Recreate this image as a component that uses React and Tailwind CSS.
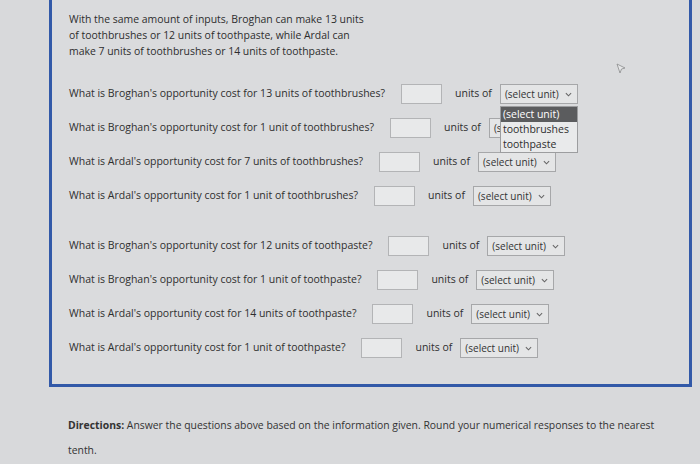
import React from 'react';

const groups = [
    [
        "What is Broghan's opportunity cost for 13 units of toothbrushes?",
        "What is Broghan's opportunity cost for 1 unit of toothbrushes?",
        "What is Ardal's opportunity cost for 7 units of toothbrushes?",
        "What is Ardal's opportunity cost for 1 unit of toothbrushes?",
    ],
    [
        "What is Broghan's opportunity cost for 12 units of toothpaste?",
        "What is Broghan's opportunity cost for 1 unit of toothpaste?",
        "What is Ardal's opportunity cost for 14 units of toothpaste?",
        "What is Ardal's opportunity cost for 1 unit of toothpaste?",
    ],
];

const Chevron = () => (
    <svg className="w-[7px] h-[5px] text-[#666]" viewBox="0 0 8 5" fill="none" stroke="currentColor" strokeWidth="1.2">
        <path d="M1 1l3 3 3-3" />
    </svg>
);

const UnitSelect = ({ open }) => (
    <div className="relative ml-[8px]">
        <div className="w-[78px] h-[20px] flex items-center justify-between pl-[4px] pr-[5px] bg-[#e4e5e6] border border-[#a6a7a9] text-[10px] text-[#333]">
            <span>(select unit)</span>
            <Chevron />
        </div>
        {open && (
            <div className="absolute left-0 top-[22px] w-[78px] bg-[#e9eaeb] border border-[#9c9d9f] text-[10.5px] leading-[15px] text-[#2e2e2e] z-10">
                <div className="bg-[#5b5c5e] text-white px-[2px]">(select unit)</div>
                <div className="px-[2px]">toothbrushes</div>
                <div className="px-[2px]">toothpaste</div>
            </div>
        )}
    </div>
);

const Row = ({ text, open }) => (
    <div className="h-[34px] flex items-center text-[10.5px] text-[#2f2f2f]">
        <span>{text}</span>
        <div className="ml-[16px] w-[41px] h-[20px] bg-[#e8e9ea] border border-[#b3b4b6]" />
        <span className="ml-[13px]">units of</span>
        <UnitSelect open={open} />
    </div>
);

export default function App() {
    return (
        <div className="relative w-[700px] h-[464px] overflow-hidden bg-[#d8d9db]" style={{ fontFamily: '"Open Sans", "Liberation Sans", sans-serif' }}>
            <div className="ml-[49px] w-[643px] border-l-[3px] border-r-[3px] border-b-[3px] border-[#3259a8] bg-[#dadbdd] pl-[17px] pt-[11px] pb-[19px]">
                <p className="text-[10.45px] leading-[16px] text-[#2d2d2d]">
                    With the same amount of inputs, Broghan can make 13 units<br />
                    of toothbrushes or 12 units of toothpaste, while Ardal can<br />
                    make 7 units of toothbrushes or 14 units of toothpaste.
                </p>
                <div className="mt-[18px]">
                    {groups[0].map((q, i) => (
                        <Row key={i} text={q} open={i === 0} />
                    ))}
                </div>
                <div className="mt-[16px]">
                    {groups[1].map((q, i) => (
                        <Row key={i} text={q} />
                    ))}
                </div>
            </div>
            <p className="ml-[68px] mt-[26px] text-[10.4px] leading-[25px] text-[#333]">
                <span className="font-bold">Directions:</span> Answer the questions above based on the information given. Round your numerical responses to the nearest<br />
                tenth.
            </p>
            <svg className="absolute left-[616px] top-[63px] w-[10px] h-[11px]" viewBox="0 0 10 11" fill="none" stroke="#8a8b8d" strokeWidth="0.8">
                <path d="M1 1l8 4-3.5 1L4 10z" fill="#e6e7e8" />
            </svg>
        </div>
    );
}
